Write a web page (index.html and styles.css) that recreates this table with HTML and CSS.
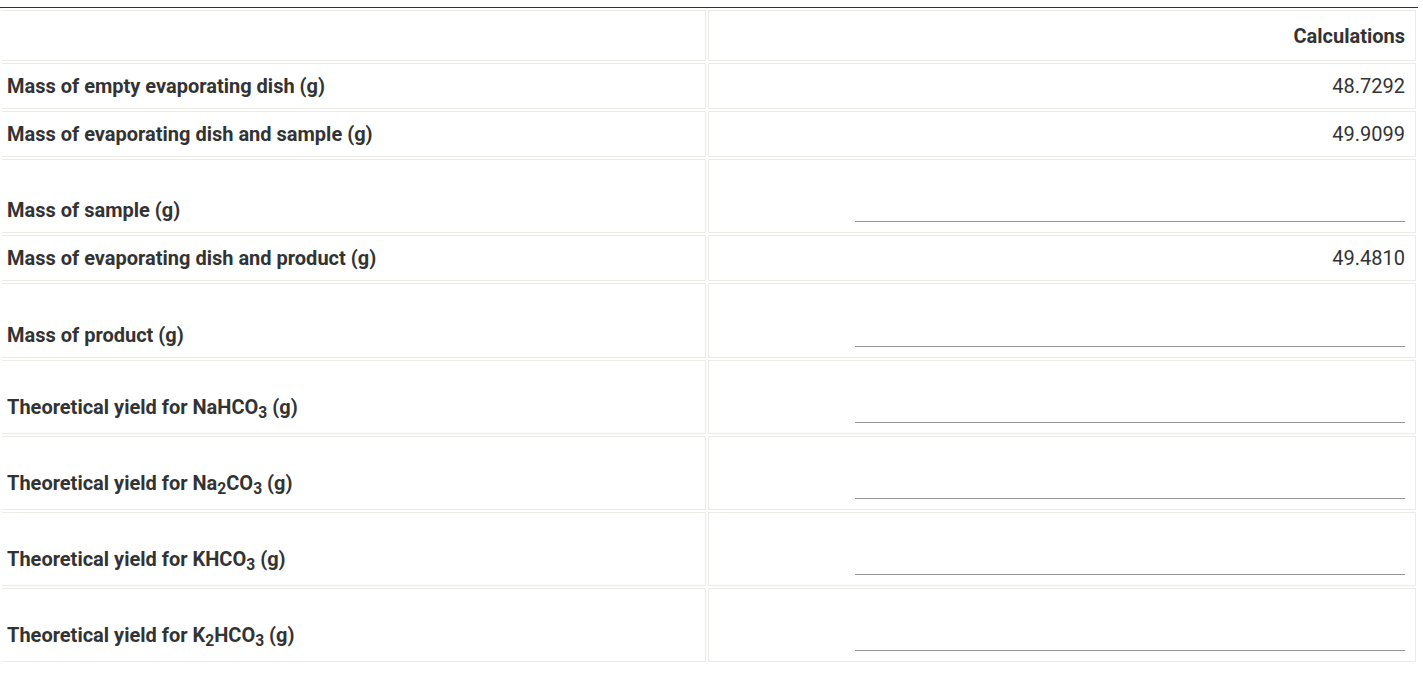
FILE: index.html
```html
<!DOCTYPE html>
<html>
<head>
<meta charset="utf-8">
<link rel="stylesheet" href="styles.css">
</head>
<body>
<div class="wrap">
<table class="calc">
  <tr class="head">
    <th class="label"></th>
    <th class="val">Calculations</th>
  </tr>
  <tr class="data">
    <td class="label">Mass of empty evaporating dish (g)</td>
    <td class="val">48.7292</td>
  </tr>
  <tr class="data">
    <td class="label">Mass of evaporating dish and sample (g)</td>
    <td class="val">49.9099</td>
  </tr>
  <tr class="blank">
    <td class="label">Mass of sample (g)</td>
    <td class="val"><div class="field"></div></td>
  </tr>
  <tr class="data">
    <td class="label">Mass of evaporating dish and product (g)</td>
    <td class="val">49.4810</td>
  </tr>
  <tr class="blank tall">
    <td class="label">Mass of product (g)</td>
    <td class="val"><div class="field"></div></td>
  </tr>
  <tr class="blank">
    <td class="label">Theoretical yield for NaHCO<sub>3</sub> (g)</td>
    <td class="val"><div class="field"></div></td>
  </tr>
  <tr class="blank">
    <td class="label">Theoretical yield for Na<sub>2</sub>CO<sub>3</sub> (g)</td>
    <td class="val"><div class="field"></div></td>
  </tr>
  <tr class="blank">
    <td class="label">Theoretical yield for KHCO<sub>3</sub> (g)</td>
    <td class="val"><div class="field"></div></td>
  </tr>
  <tr class="blank">
    <td class="label">Theoretical yield for K<sub>2</sub>HCO<sub>3</sub> (g)</td>
    <td class="val"><div class="field"></div></td>
  </tr>
</table>
</div>
</body>
</html>
```

FILE: styles.css
```css
html, body {
  margin: 0;
  padding: 0;
  background: #fff;
}
body {
  font-family: Roboto, "Liberation Sans", Arial, sans-serif;
  color: #333;
}
.wrap {
  width: 1418px;
  margin-top: 7px;
  border-top: 1px solid #333;
}
.calc {
  border-collapse: separate;
  border-spacing: 2px;
  width: 1418px;
  table-layout: fixed;
}
.calc th,
.calc td {
  border: 1px solid #ecebe6;
  padding: 0;
}
.calc .label {
  width: 698px;
  border-left: 0;
  text-align: left;
  font-size: 20px;
  font-weight: 700;
  line-height: 22px;
  padding-left: 5px;
}
.calc .val {
  text-align: right;
  padding-right: 10px;
}
.head th {
  height: 49px;
  vertical-align: middle;
}
.head .val {
  font-size: 20px;
  font-weight: 700;
}
.data td {
  height: 44px;
  vertical-align: middle;
}
.data .val {
  font-size: 20px;
  font-weight: 400;
  line-height: 22px;
}
.blank td {
  height: 61px;
  vertical-align: bottom;
}
.blank.tall td {
  height: 62px;
}
.blank .label {
  padding-bottom: 11px;
}
.blank .val {
  padding-bottom: 10px;
}
.field {
  width: 550px;
  height: 51px;
  margin-left: auto;
  border-bottom: 1px solid #969696;
}
sub {
  font-size: 0.78em;
  line-height: 1;
  vertical-align: -0.28em;
}
```
